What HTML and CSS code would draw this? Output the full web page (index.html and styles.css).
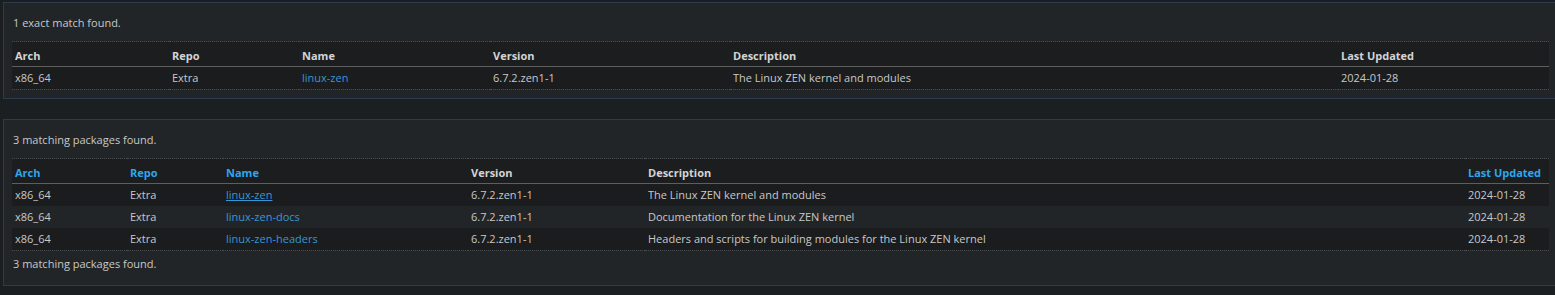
FILE: index.html
```html
<!DOCTYPE html>
<html lang="en">
<head>
<meta charset="utf-8">
<title>Package Search</title>
<link rel="stylesheet" href="styles.css">
</head>
<body>
<div class="page">
  <div class="box">
    <p class="note">1 exact match found.</p>
    <table class="results exact">
      <colgroup>
        <col class="c1"><col class="c2"><col class="c3"><col class="c4"><col class="c5"><col class="c6">
      </colgroup>
      <thead>
        <tr><th>Arch</th><th>Repo</th><th>Name</th><th>Version</th><th>Description</th><th>Last Updated</th></tr>
      </thead>
      <tbody>
        <tr class="odd"><td>x86_64</td><td>Extra</td><td><a href="#">linux-zen</a></td><td>6.7.2.zen1-1</td><td>The Linux ZEN kernel and modules</td><td>2024-01-28</td></tr>
      </tbody>
    </table>
  </div>

  <div class="box">
    <p class="note">3 matching packages found.</p>
    <table class="results sortable">
      <colgroup>
        <col class="c1"><col class="c2"><col class="c3"><col class="c4"><col class="c5"><col class="c6">
      </colgroup>
      <thead>
        <tr><th><a href="#">Arch</a></th><th><a href="#">Repo</a></th><th><a href="#">Name</a></th><th>Version</th><th>Description</th><th><a href="#">Last Updated</a></th></tr>
      </thead>
      <tbody>
        <tr class="odd"><td>x86_64</td><td>Extra</td><td><a href="#" class="visited">linux-zen</a></td><td>6.7.2.zen1-1</td><td>The Linux ZEN kernel and modules</td><td>2024-01-28</td></tr>
        <tr class="even"><td>x86_64</td><td>Extra</td><td><a href="#">linux-zen-docs</a></td><td>6.7.2.zen1-1</td><td>Documentation for the Linux ZEN kernel</td><td>2024-01-28</td></tr>
        <tr class="odd"><td>x86_64</td><td>Extra</td><td><a href="#">linux-zen-headers</a></td><td>6.7.2.zen1-1</td><td>Headers and scripts for building modules for the Linux ZEN kernel</td><td>2024-01-28</td></tr>
      </tbody>
    </table>
    <p class="note bottom">3 matching packages found.</p>
  </div>
</div>
</body>
</html>
```

FILE: styles.css
```css
html, body {
  margin: 0;
  padding: 0;
  background: #1c1f21;
  overflow: hidden;
}

body {
  font-family: "Open Sans", "Noto Sans", "Liberation Sans", sans-serif;
  font-size: 11px;
  line-height: 16px;
  color: #c8c8c8;
}

.page {
  width: 1555px;
  padding: 2px 0 0 3px;
}

.box {
  background: #212527;
  border: 1px solid #2c3b4e;
  padding: 8px;
  margin-bottom: 20px;
}

.note {
  margin: 4px 0 10px 1px;
}

.note.bottom {
  margin: 5px 0 5px 1px;
}

.results {
  width: 100%;
  table-layout: fixed;
  border-collapse: collapse;
  border-top: 1px dotted #4a4d50;
  border-bottom: 1px dotted #4a4d50;
}

.results th {
  text-align: left;
  font-weight: bold;
  color: #d4d4d4;
  background: #1b1d1f;
  padding: 6px 3px 2px;
  border-bottom: 1px solid #5e5e5e;
  white-space: nowrap;
}

.results td {
  padding: 3px 3px;
  white-space: nowrap;
  overflow: hidden;
}

.results tr.odd td {
  background: #1a1c1e;
}

.results tr.even td {
  background: #222527;
}

a {
  color: #3497d8;
  text-decoration: none;
}

a.visited {
  text-decoration: underline;
}

.sortable th a {
  color: #2ea6ec;
}

.exact .c1 { width: 157px; }
.exact .c2 { width: 130px; }
.exact .c3 { width: 191px; }
.exact .c4 { width: 240px; }
.exact .c5 { width: 608px; }
.exact .c6 { width: 211px; }

.sortable .c1 { width: 115px; }
.sortable .c2 { width: 96px; }
.sortable .c3 { width: 245px; }
.sortable .c4 { width: 177px; }
.sortable .c5 { width: 820px; }
.sortable .c6 { width: 84px; }
```
